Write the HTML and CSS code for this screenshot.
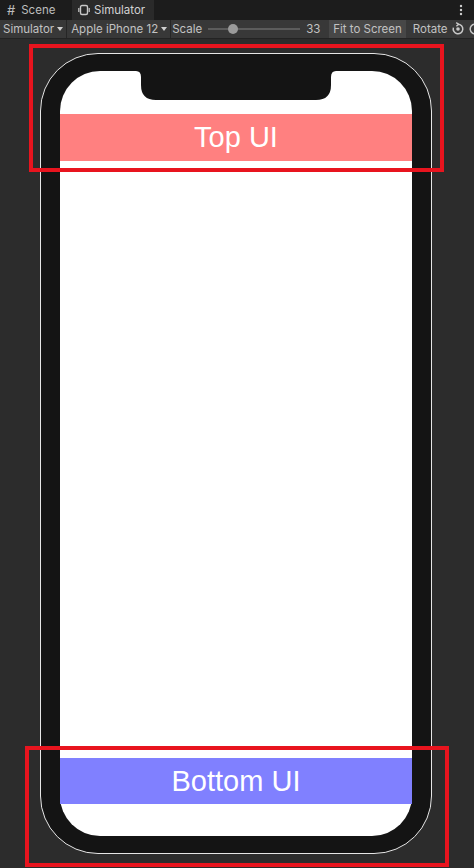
FILE: index.html
```html
<!DOCTYPE html>
<html lang="en">
<head>
<meta charset="UTF-8">
<meta name="viewport" content="width=device-width, initial-scale=1.0">
<title>Simulator</title>
<link rel="stylesheet" href="styles.css">
</head>
<body>
<div class="editor">
  <div class="tabs">
    <div class="tab"><span class="tab-icon">#</span>Scene</div>
    <div class="tab active">
      <svg class="tab-svg" width="12" height="12" viewBox="0 0 12 12">
        <rect x="2.5" y="1.5" width="7" height="9" rx="1.5" fill="none" stroke="#c8c8c8" stroke-width="1.4"/>
        <path d="M0.8 4v4M11.2 4v4" stroke="#c8c8c8" stroke-width="1.2"/>
      </svg>
      Simulator
    </div>
    <div class="tab-menu">
      <svg width="4" height="12" viewBox="0 0 4 12">
        <circle cx="2" cy="2" r="1.2" fill="#cfcfcf"/>
        <circle cx="2" cy="6" r="1.2" fill="#cfcfcf"/>
        <circle cx="2" cy="10" r="1.2" fill="#cfcfcf"/>
      </svg>
    </div>
  </div>

  <div class="toolbar">
    <div class="dropdown">Simulator<span class="caret"></span></div>
    <div class="dropdown">Apple iPhone 12<span class="caret"></span></div>
    <div class="scale">
      <span>Scale</span>
      <div class="slider"><div class="thumb"></div></div>
      <span class="value">33</span>
    </div>
    <button class="tool-btn">Fit to Screen</button>
    <div class="rotate">
      <span>Rotate</span>
      <svg width="14" height="14" viewBox="0 0 14 14">
        <path d="M7 2.2a4.8 4.8 0 1 1-4.6 3.4" fill="none" stroke="#c8c8c8" stroke-width="1.5"/>
        <path d="M5.2 0.6L7.6 2.3 5.4 4.2" fill="none" stroke="#c8c8c8" stroke-width="1.4"/>
        <circle cx="7" cy="7" r="1.8" fill="#c8c8c8"/>
      </svg>
      <svg width="14" height="14" viewBox="0 0 14 14">
        <path d="M7 2.2a4.8 4.8 0 1 0 4.6 3.4" fill="none" stroke="#c8c8c8" stroke-width="1.5"/>
      </svg>
    </div>
  </div>

  <div class="viewport">
    <div class="device">
      <div class="screen">
        <svg class="notch" width="200" height="29" viewBox="0 0 200 29">
          <path d="M0 0H200Q195 0 195 6V14Q195 29 180 29H20Q5 29 5 14V6Q5 0 0 0Z" fill="#141414"/>
        </svg>
        <div class="bar top-ui">Top UI</div>
        <div class="bar bottom-ui">Bottom UI</div>
      </div>
    </div>
    <div class="highlight hl-top"></div>
    <div class="highlight hl-bottom"></div>
  </div>
</div>
</body>
</html>
```

FILE: styles.css
```css
body {
  margin: 0;
  background: #2c2c2c;
  font-family: Inter, "Noto Sans", sans-serif;
  overflow: hidden;
}
.editor {
  width: 474px;
  height: 868px;
  display: flex;
  flex-direction: column;
}

/* window tabs */
.tabs {
  height: 20px;
  background: #1c1c1c;
  display: flex;
  align-items: stretch;
  font-size: 11.5px;
  color: #bdbdbd;
}
.tab {
  display: flex;
  align-items: center;
  padding: 0 6px 0 7px;
  width: 59px;
}
.tab-icon {
  font-size: 13px;
  margin-right: 6px;
}
.tab.active {
  background: #2a2a2a;
  color: #d2d2d2;
  width: 70px;
  padding-left: 6px;
}
.tab-svg {
  margin-right: 4px;
}
.tab-menu {
  margin-left: auto;
  display: flex;
  align-items: center;
  padding-right: 11px;
}

/* simulator toolbar */
.toolbar {
  height: 18px;
  background: #383838;
  border-bottom: 1px solid #232323;
  display: flex;
  align-items: stretch;
  font-size: 11.5px;
  color: #c2c2c2;
  white-space: nowrap;
}
.dropdown {
  display: flex;
  align-items: center;
  padding: 0 3px;
  border-right: 1px solid #262626;
}
.dropdown + .dropdown {
  padding-left: 4px;
}
.caret {
  width: 0;
  height: 0;
  margin-left: 3px;
  border-left: 3.5px solid transparent;
  border-right: 3.5px solid transparent;
  border-top: 4px solid #cfcfcf;
}
.scale {
  display: flex;
  align-items: center;
  padding-left: 1px;
}
.slider {
  position: relative;
  width: 92px;
  height: 2px;
  background: #5c5c5c;
  margin: 0 6px 0 6px;
}
.thumb {
  position: absolute;
  left: 20px;
  top: -4px;
  width: 10px;
  height: 10px;
  border-radius: 50%;
  background: #9a9a9a;
}
.value {
  width: 22px;
}
.tool-btn {
  font: inherit;
  color: #c2c2c2;
  background: #474747;
  border: none;
  padding: 0 4px;
  margin-left: 1px;
}
.rotate {
  display: flex;
  align-items: center;
  gap: 3px;
  padding-left: 7px;
}

/* device preview */
.viewport {
  position: relative;
  flex: 1;
  display: flex;
  justify-content: center;
  align-items: center;
}
.device {
  box-sizing: border-box;
  width: 392px;
  height: 801px;
  margin-right: 2px;
  padding: 17px 19px;
  background: #141414;
  border: 1.5px solid #e6e6e6;
  border-radius: 58px;
}
.screen {
  position: relative;
  height: 100%;
  background: #fff;
  border-radius: 40px;
  display: flex;
  flex-direction: column;
  justify-content: space-between;
  padding: 43px 0 32px;
  box-sizing: border-box;
}
.notch {
  position: absolute;
  top: 0;
  left: 50%;
  transform: translateX(-50%);
  display: block;
}
.bar {
  height: 47px;
  line-height: 47px;
  text-align: center;
  color: #fff;
  font-family: "Liberation Sans", Arial, sans-serif;
  font-size: 29px;
}
.top-ui {
  background: #ff8080;
}
.bottom-ui {
  height: 46px;
  line-height: 46px;
  background: #8080ff;
}

/* red outline markers */
.highlight {
  position: absolute;
  border: 4px solid #e8141e;
  box-sizing: border-box;
}
.hl-top {
  left: 29px;
  top: 5px;
  width: 415px;
  height: 128px;
}
.hl-bottom {
  left: 25px;
  top: 707px;
  width: 424px;
  height: 121px;
}
```
